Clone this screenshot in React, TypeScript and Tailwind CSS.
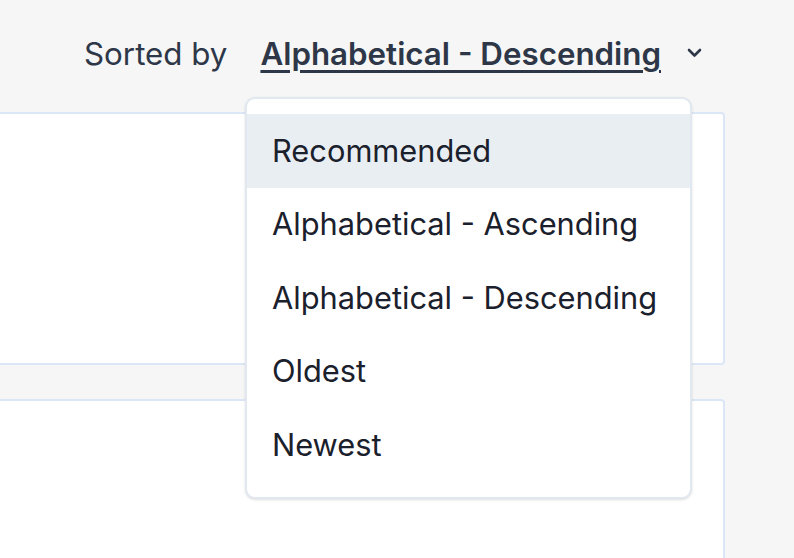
import React from 'react'

const options = [
  'Recommended',
  'Alphabetical - Ascending',
  'Alphabetical - Descending',
  'Oldest',
  'Newest',
]

export default function App() {
  return (
    <main
      className="relative h-[558px] w-[794px] overflow-hidden bg-[#f6f6f6]"
      style={{ fontFamily: 'Inter, "Noto Sans", sans-serif' }}
    >
      <header className="flex h-[112px] items-start justify-end pr-[92px] pt-[34px]">
        <span className="text-[31.3px] leading-[40px] text-[#2d3748]">Sorted by</span>
        <button className="ml-[33px] flex items-center text-[31.3px] font-semibold leading-[40px] text-[#2d3748]">
          <span className="underline decoration-[3px] underline-offset-[5px]">
            Alphabetical - Descending
          </span>
          <svg
            width="15"
            height="10"
            viewBox="0 0 15 10"
            fill="none"
            className="ml-[26px] -mt-[2px]"
          >
            <path
              d="M2 2l5.5 5.5L13 2"
              stroke="#2d3748"
              strokeWidth="2.6"
              strokeLinecap="round"
              strokeLinejoin="round"
            />
          </svg>
        </button>
      </header>

      <section className="-ml-[10px] flex w-[735px] flex-col gap-[34px]">
        <div className="h-[253px] rounded-[4px] border-2 border-[#dbe6f6] bg-white" />
        <div className="h-[200px] rounded-[4px] border-2 border-[#dbe6f6] bg-white" />
      </section>

      <ul className="absolute left-[245px] top-[97px] w-[447px] rounded-[10px] border-2 border-[#e2e8f0] bg-white py-[15px] shadow-sm">
        {options.map((o, i) => (
          <li
            key={o}
            className={`flex h-[73.5px] items-center pl-[25px] text-[30.8px] text-[#1a202c] ${
              i === 0 ? 'bg-[#e9eef3]' : ''
            }`}
          >
            {o}
          </li>
        ))}
      </ul>
    </main>
  )
}
